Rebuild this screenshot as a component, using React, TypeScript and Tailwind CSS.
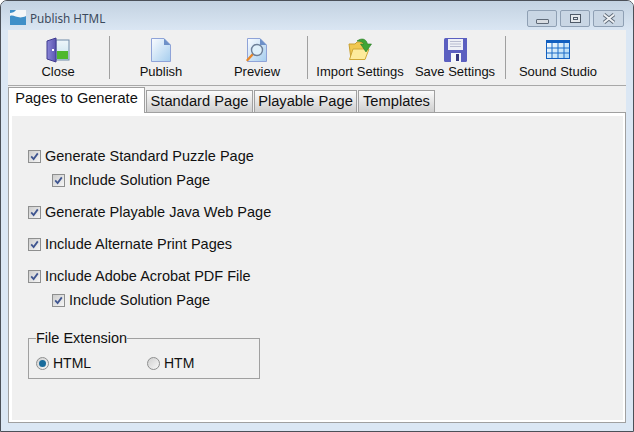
const font = "font-['Liberation_Sans',Arial,sans-serif]";

function CloseIcon() {
  return (
    <svg width="24" height="26" viewBox="0 0 24 26">
      <defs>
        <linearGradient id="doorG" x1="0" y1="0" x2="1" y2="0">
          <stop offset="0" stopColor="#8a86d8" />
          <stop offset="1" stopColor="#5a55b0" />
        </linearGradient>
        <linearGradient id="skyG" x1="0" y1="0" x2="0" y2="1">
          <stop offset="0" stopColor="#eef6fa" />
          <stop offset="1" stopColor="#c6e2ee" />
        </linearGradient>
      </defs>
      <rect x="10" y="3" width="13" height="20" fill="url(#skyG)" stroke="#6f8aa8" />
      <rect x="11" y="14" width="11" height="8" fill="#4fb82e" />
      <path d="M1 4 L10 1 V25 L1 22 Z" fill="url(#doorG)" stroke="#3f3a8f" />
      <rect x="6" y="12" width="2" height="2" fill="#fff" />
    </svg>
  );
}

function PageIcon() {
  return (
    <svg width="20" height="24" viewBox="0 0 20 24">
      <defs>
        <linearGradient id="pageG" x1="0" y1="0" x2="1" y2="1">
          <stop offset="0" stopColor="#fafcff" />
          <stop offset="1" stopColor="#a5cdee" />
        </linearGradient>
      </defs>
      <path d="M0.5 0.5 H13 L19.5 7 V23.5 H0.5 Z" fill="url(#pageG)" stroke="#8fa3d8" />
      <path d="M13 0.5 V7 H19.5 Z" fill="#6d90c8" />
    </svg>
  );
}

function PreviewIcon() {
  return (
    <svg width="22" height="24" viewBox="0 0 22 24">
      <defs>
        <linearGradient id="prevG" x1="0" y1="0" x2="1" y2="1">
          <stop offset="0" stopColor="#fafcff" />
          <stop offset="1" stopColor="#a5cdee" />
        </linearGradient>
      </defs>
      <path d="M1.5 0.5 H14 L20.5 7 V23.5 H1.5 Z" fill="url(#prevG)" stroke="#8fa3d8" />
      <path d="M14 0.5 V7 H20.5 Z" fill="#6d90c8" />
      <path d="M1.5 22 L7 16" stroke="#e8882a" strokeWidth="2.4" strokeLinecap="round" />
      <circle cx="11" cy="12" r="5.5" fill="#dff0fa" stroke="#6d7f98" strokeWidth="1.4" />
    </svg>
  );
}

function FolderIcon() {
  return (
    <svg width="24" height="23" viewBox="0 0 24 23">
      <path d="M1 6 H7 L9 4 H17 V21 H3 Z" fill="#f0c850" stroke="#c9a030" />
      <path d="M1.5 21.5 L5 11 H21 L17 21.5 Z" fill="#fdeb9c" stroke="#cfa838" />
      <path d="M9 3 C13 0 18 0 19.5 6 H23.5 L18 14 L12.5 6 H16 C15 4 12 3 9 3 Z" fill="#3fa535" stroke="#2b7a26" strokeWidth="0.6" />
    </svg>
  );
}

function SaveIcon() {
  return (
    <svg width="23" height="24" viewBox="0 0 23 24">
      <path d="M0 1.5 Q0 0 1.5 0 H23 V22.5 Q23 24 21.5 24 H1.5 Q0 24 0 22.5 Z" fill="#5b5fc0" />
      <rect x="4" y="1" width="15" height="11" fill="#eef0f6" />
      <path d="M6 3.5 H17 M6 6 H17 M6 8.5 H17" stroke="#b8bcd0" />
      <rect x="7" y="15" width="10" height="9" fill="#f4f6fa" />
      <rect x="12" y="16" width="3" height="7" fill="#33367e" />
    </svg>
  );
}

function GridIcon() {
  return (
    <svg width="24" height="19" viewBox="0 0 24 19">
      <defs>
        <linearGradient id="gridG" x1="0" y1="0" x2="1" y2="1">
          <stop offset="0" stopColor="#ffffff" />
          <stop offset="1" stopColor="#a8d6f4" />
        </linearGradient>
      </defs>
      <rect x="0.5" y="0.5" width="23" height="18" fill="url(#gridG)" stroke="#1260c0" />
      <rect x="0" y="0" width="24" height="3" fill="#1260c0" />
      <path d="M6 3 V18 M12 3 V18 M18 3 V18 M1 8 H23 M1 13 H23" stroke="#1a6cc8" />
    </svg>
  );
}

function ToolButton({ label, icon, className }: { label: string; icon: React.ReactNode; className: string }) {
  return (
    <div className={`flex flex-col items-center ${className}`}>
      <div className="h-[28px] flex items-center justify-center">{icon}</div>
      <span className="text-[13px] leading-[16px] text-[#111] whitespace-nowrap">{label}</span>
    </div>
  );
}

function Sep({ className }: { className: string }) {
  return <div className={`w-px h-[43px] bg-[#a0a0a0] ${className}`} />;
}

function Tab({ label, className }: { label: string; className: string }) {
  return (
    <div className={`h-[22px] ml-px flex items-center justify-center border border-b-0 border-[#a0a0a0] bg-gradient-to-b from-[#fbfbfb] to-[#cfcfcf] text-[14.7px] text-[#111] whitespace-nowrap ${className}`}>
      {label}
    </div>
  );
}

function Check({ label, className }: { label: string; className: string }) {
  return (
    <div className={`flex items-center h-[16px] ${className}`}>
      <div className="w-[13px] h-[13px] border border-[#8e8f8f] bg-gradient-to-br from-[#cdcdcd] to-[#f6f6f6] flex items-center justify-center">
        <svg width="9" height="9" viewBox="0 0 9 9">
          <path d="M1.2 4.4 L3.6 7 L7.8 1.4" fill="none" stroke="#3f5590" strokeWidth="1.8" />
        </svg>
      </div>
      <span className="ml-[4px] text-[14.5px] leading-[16px] text-[#111] whitespace-nowrap">{label}</span>
    </div>
  );
}

function Radio({ label, on, className }: { label: string; on?: boolean; className: string }) {
  return (
    <div className={`flex items-center ${className}`}>
      <div className="w-[13px] h-[13px] rounded-full border border-[#8e8f8f] bg-gradient-to-br from-[#d0d0d0] to-[#f8f8f8] flex items-center justify-center">
        {on && <div className="w-[7px] h-[7px] rounded-full bg-[#1a6c9c]" />}
      </div>
      <span className="ml-[4px] text-[14px] leading-[16px] text-[#111]">{label}</span>
    </div>
  );
}

export default function App() {
  return (
    <div className={`w-[634px] h-[432px] flex flex-col overflow-hidden bg-[#dbe7f4] border border-[#4b5058] rounded-t-[7px] ${font}`}>
      {/* title bar */}
      <div className="h-[29px] shrink-0 flex bg-gradient-to-b from-[#c3d2e1] to-[#dae6f3] pl-[9px] pr-[9px]">
        <div className="mt-[9px]">
          <svg width="16" height="16" viewBox="0 0 16 16">
            <rect width="16" height="15" fill="#f4f6f8" />
            <path d="M0 6 C4 4 8 10 16 6 V15 H0 Z" fill="#3f8fc8" />
            <path d="M0 0 H6 C5 2 2 3 0 3 Z" fill="#3f8fc8" />
          </svg>
        </div>
        <span className="ml-[4px] mt-[9px] text-[11.7px] leading-[17px] text-[#3c4a5c] font-['Noto_Sans',sans-serif] whitespace-nowrap">
          Publish HTML
        </span>
        <div className="ml-auto mt-[9px] flex gap-[3px]">
          <div className="w-[30px] h-[17px] border border-[#8fa0b4] rounded-[2px] bg-[#c9d6e4] flex items-end justify-center pb-[2px]">
            <div className="w-[13px] h-[5px] bg-[#d9dde2] border border-[#5f6a78] rounded-[1px]" />
          </div>
          <div className="w-[30px] h-[17px] border border-[#8fa0b4] rounded-[2px] bg-[#c9d6e4] flex items-center justify-center">
            <div className="w-[11px] h-[9px] bg-[#e4e8ec] border border-[#4f5a68] flex items-center justify-center">
              <div className="w-[5px] h-[3px] border border-[#4f5a68]" />
            </div>
          </div>
          <div className="w-[31px] h-[17px] border border-[#8fa0b4] rounded-[2px] bg-[#c9d6e4] flex items-center justify-center">
            <svg width="14" height="11" viewBox="0 0 14 11">
              <path d="M2 1.5 L12 9.5 M12 1.5 L2 9.5" stroke="#5f6a78" strokeWidth="3.8" />
              <path d="M2 1.5 L12 9.5 M12 1.5 L2 9.5" stroke="#eef1f4" strokeWidth="2" />
            </svg>
          </div>
        </div>
      </div>

      <div className="flex-1 flex flex-col mx-[7px] mb-[8px] min-h-0">
        {/* toolbar */}
        <div className="h-[56px] shrink-0 flex items-center bg-[#f0f0f0] border-b border-[#a8a8a8] pl-[2px]">
          <ToolButton label="Close" icon={<CloseIcon />} className="w-[96px]" />
          <Sep className="ml-[3px]" />
          <ToolButton label="Publish" icon={<PageIcon />} className="w-[96px] ml-[3px]" />
          <ToolButton label="Preview" icon={<PreviewIcon />} className="w-[96px]" />
          <Sep className="ml-[2px]" />
          <ToolButton label="Import Settings" icon={<FolderIcon />} className="w-[96px] ml-[4px]" />
          <ToolButton label="Save Settings" icon={<SaveIcon />} className="w-[94px]" />
          <Sep className="ml-[3px]" />
          <ToolButton label="Sound Studio" icon={<GridIcon />} className="w-[96px] ml-[4px]" />
        </div>

        {/* tabs */}
        <div className="h-[26px] shrink-0 flex items-end bg-[#f0f0f0]">
          <div className="h-[26px] w-[137px] pb-[3px] flex items-center justify-center border border-b-0 border-[#a0a0a0] bg-white text-[14.6px] text-[#111] -mb-px relative z-10 whitespace-nowrap">
            Pages to Generate
          </div>
          <Tab label="Standard Page" className="w-[107px]" />
          <Tab label="Playable Page" className="w-[103px]" />
          <Tab label="Templates" className="w-[77px]" />
        </div>

        {/* panel */}
        <div className="flex-1 border border-[#a0a0a0] bg-[#f0f0f0]">
          <div className="h-full border-[3px] border-white border-r-[2px] border-b-[2px] pl-[16px] pt-[32px]">
            <Check label="Generate Standard Puzzle Page" className="" />
            <Check label="Include Solution Page" className="ml-[24px] mt-[8px]" />
            <Check label="Generate Playable Java Web Page" className="mt-[16px]" />
            <Check label="Include Alternate Print Pages" className="mt-[16px]" />
            <Check label="Include Adobe Acrobat PDF File" className="mt-[16px]" />
            <Check label="Include Solution Page" className="ml-[24px] mt-[8px]" />
            <fieldset className="mt-[22px] w-[232px] h-[49px] border border-[#a0a0a0] px-[7px]">
              <legend className="text-[14.5px] leading-[16px] text-[#111] px-0 whitespace-nowrap">File Extension</legend>
              <div className="flex items-center mt-[9px]">
                <Radio label="HTML" on className="w-[111px]" />
                <Radio label="HTM" className="" />
              </div>
            </fieldset>
          </div>
        </div>
      </div>
    </div>
  );
}
